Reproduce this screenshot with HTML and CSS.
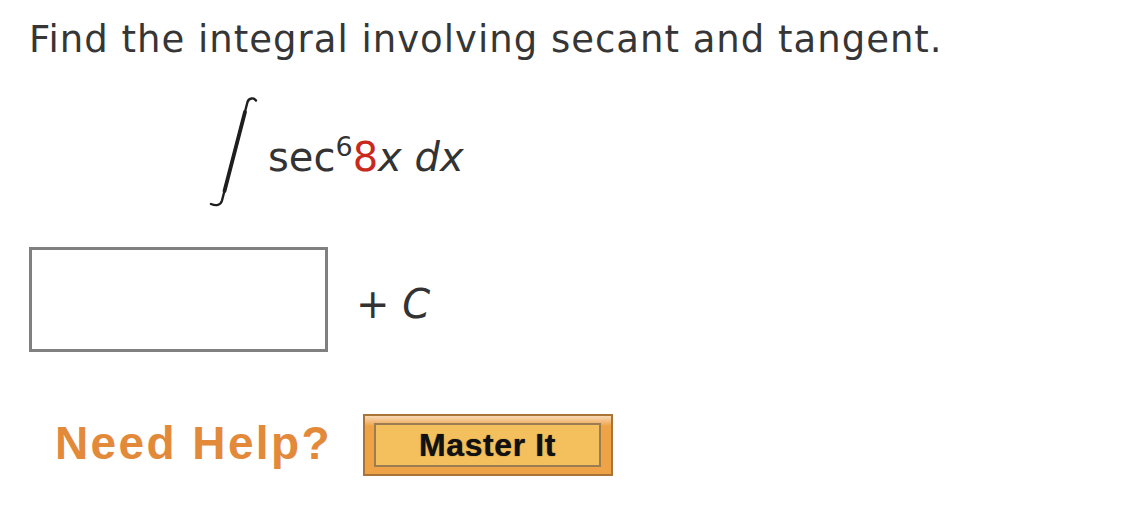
FILE: index.html
```html
<!DOCTYPE html>
<html>
<head>
<meta charset="utf-8">
<link rel="stylesheet" href="styles.css">
</head>
<body>
<div class="page">
  <div class="title">Find the integral involving secant and tangent.</div>
  <div class="math-row">
    <svg class="integral" width="52" height="112" viewBox="0 0 52 112">
      <path d="M49 4.5 C47 1.5 42 1.5 40.5 6 L15 104.5 C13.5 109.5 9 110 4 108" fill="none" stroke="#1e1e1e" stroke-width="2.4" stroke-linecap="round"/>
      <path d="M38 16 L17.5 95" fill="none" stroke="#1e1e1e" stroke-width="3.8" stroke-linecap="round"/>
    </svg>
    <div class="expr">sec<span class="sup">6</span><span class="red">8</span><i>x</i> <i>dx</i></div>
  </div>
  <div class="answer-row">
    <div class="answer-box"></div>
    <div class="plus-c">+ <i>C</i></div>
  </div>
  <div class="help-row">
    <div class="need-help">Need Help?</div>
    <div class="master-btn"><div class="master-inner">Master It</div></div>
  </div>
</div>
</body>
</html>
```

FILE: styles.css
```css
html, body {
  margin: 0;
  padding: 0;
  background: #ffffff;
}
.page {
  padding: 18px 0 0 29px;
  font-family: "DejaVu Sans", Verdana, sans-serif;
  color: #363636;
}
.title {
  font-size: 37px;
  line-height: 44px;
  letter-spacing: 1px;
  white-space: nowrap;
}
.math-row {
  display: flex;
  align-items: flex-start;
  margin-top: 34px;
  margin-left: 178px;
}
.integral {
  display: block;
  flex: none;
}
.expr {
  margin-top: 37px;
  margin-left: 9px;
  font-size: 40px;
  line-height: 48px;
  white-space: nowrap;
  color: #333333;
}
.expr i, .plus-c i {
  font-style: italic;
}
.sup {
  font-size: 27px;
  line-height: 27px;
  vertical-align: 15px;
}
.red {
  color: #c8281e;
}
.answer-row {
  display: flex;
  align-items: flex-start;
  margin-top: 39px;
}
.answer-box {
  width: 299px;
  height: 105px;
  box-sizing: border-box;
  border: 3px solid #808080;
  background: #ffffff;
}
.plus-c {
  margin-top: 33px;
  margin-left: 28px;
  font-size: 40px;
  line-height: 48px;
  color: #333333;
}
.help-row {
  display: flex;
  align-items: flex-start;
  margin-top: 62px;
}
.need-help {
  margin-left: 26px;
  font-family: "Liberation Sans", Arial, sans-serif;
  font-weight: bold;
  font-size: 46px;
  line-height: 58px;
  letter-spacing: 2.4px;
  color: #e3893a;
  white-space: nowrap;
}
.master-btn {
  margin-left: 31px;
  width: 250px;
  height: 62px;
  box-sizing: border-box;
  border: 2px solid #a87438;
  background: linear-gradient(to bottom, #f8d9b3 0px, #f3bf83 5px, #eea446 10px, #eea446 100%);
  padding: 7px 10px 7px 9px;
}
.master-inner {
  height: 44px;
  box-sizing: border-box;
  border: 2px solid #9c7c52;
  background: #f3c05d;
  font-family: "Liberation Sans", Arial, sans-serif;
  font-weight: bold;
  font-size: 32px;
  line-height: 40px;
  letter-spacing: 0.6px;
  text-align: center;
  color: #111111;
  text-shadow: 0 0 1px rgba(0, 0, 0, 0.7);
  white-space: nowrap;
}
```
